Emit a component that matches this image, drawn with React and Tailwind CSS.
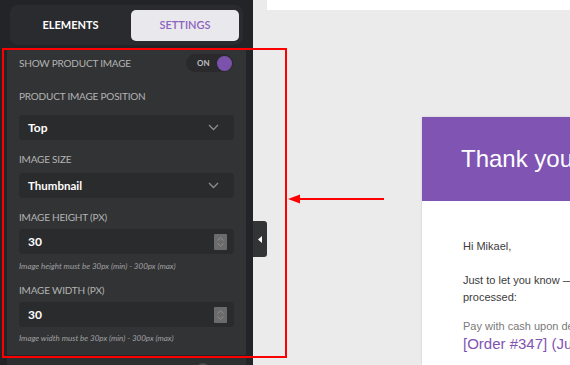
export default function App() {
  const label = "text-[10px] leading-[14px] text-[#b3b3b3] uppercase tracking-[-0.02em]";
  const select = "flex items-center justify-between h-[25px] rounded-[4px] bg-[#2a2b2d] pl-[9px] pr-[15px] shrink-0";
  const Chevron = () => (
    <svg width="11" height="7" viewBox="0 0 11 7" fill="none">
      <path d="M1 1 L5.5 5.5 L10 1" stroke="#8d8d8f" strokeWidth="1.3" />
    </svg>
  );
  const Spinner = () => (
    <div className="w-[13px] h-[16px] bg-[#6b6b6c] rounded-[1px] flex flex-col items-center justify-center gap-[2px]">
      <svg width="7" height="4" viewBox="0 0 7 4"><path d="M0.5 3.5 L3.5 0.8 L6.5 3.5" stroke="#8e8e8e" fill="none" strokeWidth="1" /></svg>
      <svg width="7" height="4" viewBox="0 0 7 4"><path d="M0.5 0.5 L3.5 3.2 L6.5 0.5" stroke="#8e8e8e" fill="none" strokeWidth="1" /></svg>
    </div>
  );
  return (
    <div className="relative w-[570px] h-[365px] overflow-hidden bg-[#ebebeb] flex" style={{ fontFamily: "Lato, 'Open Sans', sans-serif" }}>
      {/* Sidebar */}
      <div className="w-[253px] h-full bg-[#232427] flex flex-col shrink-0 overflow-hidden">
        <div className="mx-[10px] mt-[5px] h-[40px] shrink-0 rounded-[8px] bg-[#2a2b2e] flex items-center pr-[4px]">
          <div className="w-[121px] text-center text-white font-bold text-[11px]">ELEMENTS</div>
          <div className="w-[108px] h-[31px] rounded-[5px] bg-[#e9e9ed] flex items-center justify-center text-[#8c62bd] text-[11px] font-semibold">SETTINGS</div>
        </div>
        <div className="ml-[7px] w-[239px] mt-[5px] shrink-0 bg-[#323335] px-[12px] pb-[12px] flex flex-col">
          <div className="mt-[4px] h-[18px] flex items-center justify-between shrink-0">
            <span className={label}>Show product image</span>
            <div className="w-[47px] h-[18px] rounded-full bg-[#2a2a2d] flex items-center justify-between pl-[11px] pr-[1px] mr-[1px]">
              <span className="text-[8px] font-bold text-[#bdbdbd]">ON</span>
              <span className="w-[15px] h-[15px] rounded-full bg-[#7b52ab]" />
            </div>
          </div>
          <div className={`${label} mt-[17px]`}>Product image position</div>
          <div className={`${select} mt-[12px]`}>
            <span className="text-white font-bold text-[12px]">Top</span>
            <Chevron />
          </div>
          <div className={`${label} mt-[12px]`}>Image size</div>
          <div className={`${select} mt-[7px]`}>
            <span className="text-white font-bold text-[11.5px]">Thumbnail</span>
            <Chevron />
          </div>
          <div className={`${label} mt-[12px]`}>Image height (px)</div>
          <div className={`${select} mt-[5px] !pr-[7px]`}>
            <span className="text-white font-bold text-[12px]">30</span>
            <Spinner />
          </div>
          <div className="mt-[7px] h-[10px] leading-[10px] text-[8px] italic text-[#a0a0a2]">Image height must be 30px (min) - 300px (max)</div>
          <div className={`${label} mt-[12px]`}>Image width (px)</div>
          <div className={`${select} mt-[5px] !pr-[7px]`}>
            <span className="text-white font-bold text-[12px]">30</span>
            <Spinner />
          </div>
          <div className="mt-[6px] h-[10px] leading-[10px] text-[8px] italic text-[#a0a0a2]">Image width must be 30px (min) - 300px (max)</div>
        </div>
        <div className="ml-[7px] w-[239px] mt-[3px] h-[20px] shrink-0 bg-[#2d2e30] flex justify-end pr-[36px] pt-[5px]">
          <span className="w-[14px] h-[14px] rounded-full bg-[#4a4a4c]" />
        </div>
      </div>

      {/* Collapse tab */}
      <div className="flex flex-col">
        <div className="mt-[221px] w-[14px] h-[36px] bg-[#333436] rounded-r-[3px] flex items-center justify-center">
          <svg width="4" height="7" viewBox="0 0 4 7"><path d="M4 0 L0 3.5 L4 7 Z" fill="#ffffff" /></svg>
        </div>
      </div>

      {/* Preview area */}
      <div className="flex-1 flex flex-col min-w-0">
        <div className="h-[10px] bg-white shrink-0" />
        <div className="flex-1 pl-[155px] pt-[107px]" style={{ fontFamily: "'Liberation Sans', Arial, sans-serif" }}>
          <div className="h-full bg-white shadow-[0_0_2px_rgba(0,0,0,0.15)] overflow-hidden">
            <div className="h-[84px] bg-[#7f54b3] flex items-center pl-[39px] whitespace-nowrap overflow-hidden">
              <span className="text-white text-[24px] leading-none">Thank you</span>
            </div>
            <div className="pl-[41px] pt-[37px] whitespace-nowrap overflow-hidden text-[11px] leading-[17px] text-[#3c3c3c]">
              <div>Hi Mikael,</div>
              <div className="mt-[17px]">Just to let you know —</div>
              <div>processed:</div>
              <div className="mt-[12px] text-[#7a7a7a]">Pay with cash upon de</div>
              <div className="text-[#7f54b3] text-[15px] leading-[18px]">[Order #347] (Jun</div>
            </div>
          </div>
        </div>
      </div>

      {/* Annotation overlay */}
      <div className="absolute left-[2px] top-[48px] w-[285px] h-[310px] border-2 border-[#ff0000] pointer-events-none" />
      <svg className="absolute left-[286px] top-[193px] pointer-events-none" width="100" height="12" viewBox="0 0 100 12">
        <line x1="10" y1="6" x2="98" y2="6" stroke="#ff0000" strokeWidth="2" />
        <path d="M2 6 L14 1.5 L14 10.5 Z" fill="#ff0000" />
      </svg>
    </div>
  );
}
